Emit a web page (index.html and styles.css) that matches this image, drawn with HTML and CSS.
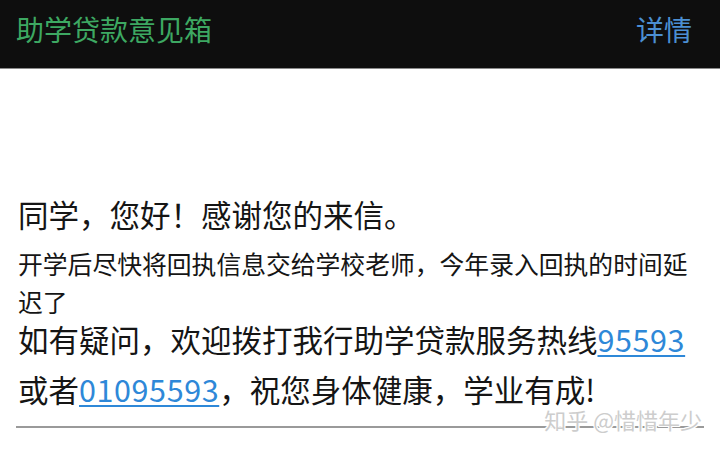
FILE: index.html
```html
<!DOCTYPE html>
<html lang="zh-CN">
<head>
<meta charset="utf-8">
<title>助学贷款意见箱</title>
<link rel="stylesheet" href="styles.css">
</head>
<body>
<header class="topbar">
  <div class="title">助学贷款意见箱</div>
  <div class="detail">详情</div>
</header>
<main class="content">
  <p class="greet">同学，您好！感谢您的来信。</p>
  <p class="note">开学后尽快将回执信息交给学校老师，今年录入回执的时间延迟了</p>
  <p class="contact">如有疑问，欢迎拨打我行助学贷款服务热线<a class="tel" href="#">95593</a>或者<a class="tel" href="#">01095593</a>，祝您身体健康，学业有成!</p>
  <div class="rule"></div>
  <div class="watermark">知乎 @惜惜年少</div>
</main>
</body>
</html>
```
FILE: styles.css
```css
html, body {
  margin: 0;
  padding: 0;
  background: #ffffff;
}
body {
  width: 720px;
  height: 450px;
  overflow: hidden;
  font-family: "Noto Sans CJK SC", "Noto Sans", sans-serif;
  color: #151515;
}
.topbar {
  height: 69px;
  box-sizing: border-box;
  background: #0e0e0e;
  border-bottom: 1px solid #8a8a8a;
  display: flex;
  justify-content: space-between;
  align-items: flex-start;
  padding: 9px 28px 0 16px;
}
.title {
  font-size: 28px;
  line-height: 40px;
  color: #3da862;
}
.detail {
  font-size: 28px;
  line-height: 40px;
  color: #4b8fd3;
}
.content {
  position: relative;
  padding: 0 16px 0 18px;
}
.content p {
  margin: 0;
}
.greet {
  margin-top: 115px !important;
  font-size: 30.5px;
  line-height: 60px;
}
.note {
  font-size: 24.8px;
  line-height: 38px;
}
.contact {
  font-size: 30.5px;
  line-height: 50px;
  margin-top: -6px !important;
}
.tel {
  color: #2e88d8;
  letter-spacing: 0.6px;
  text-decoration: underline;
  text-decoration-thickness: 2px;
  text-underline-offset: 3px;
}
.rule {
  height: 2px;
  background: #9a9a9a;
  margin: 12px 0 0 -2px;
}
.watermark {
  position: absolute;
  right: 18px;
  bottom: -6px;
  font-size: 22px;
  line-height: 30px;
  color: #cdcdcd;
  text-shadow: 0 0 1px #fff, 1px 1px 0 #ffffff, -1px -1px 0 #ffffff, 1px -1px 0 #ffffff, -1px 1px 0 #ffffff;
}
```
